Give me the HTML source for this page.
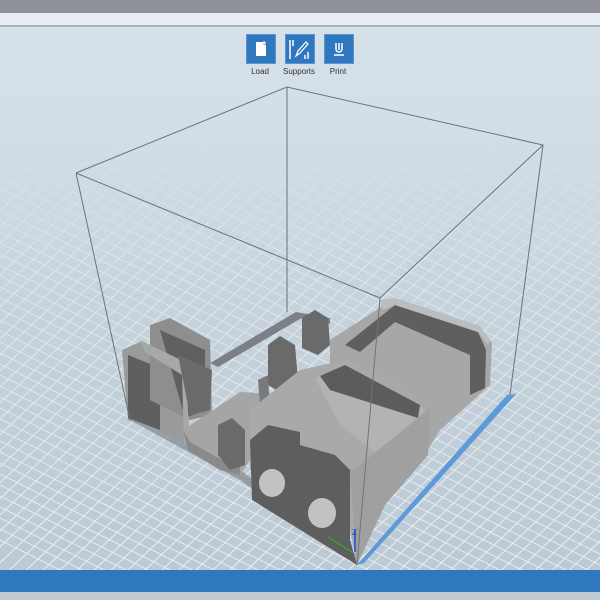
<!DOCTYPE html>
<html><head><meta charset="utf-8"><style>
html,body{margin:0;padding:0;width:600px;height:600px;overflow:hidden;font-family:"Liberation Sans",sans-serif}
#bg{position:absolute;left:0;top:0;width:600px;height:600px;background:linear-gradient(#d6e1ea 0,#d3dee7 120px,#c6d3dd 300px,#bccad5 560px)}
.tabs{position:absolute;left:0;top:0;width:600px;height:13px;background:#8e9296}
.addr{position:absolute;left:0;top:13px;width:600px;height:12px;background:#e9ecf4;border-bottom:2px solid #a9b0b8}
.btn{position:absolute;top:34px;width:28px;height:28px;background:#2f78c0;border:1px solid #5b95cf}
.lbl{position:absolute;top:67px;font-size:8px;color:#333;text-align:center;width:60px}
.bar{position:absolute;left:0;top:570px;width:600px;height:22px;background:#2f78bf}
.bot{position:absolute;left:0;top:592px;width:600px;height:8px;background:#bfcad3}
</style></head><body>
<div id="bg"></div>
<svg id="g" width="600" height="600" style="position:absolute;left:0;top:0;overflow:hidden">
<defs><linearGradient id="fade" x1="0" y1="0" x2="0" y2="1"><stop offset="0.22" stop-color="#fff" stop-opacity="0"/><stop offset="0.45" stop-color="#fff" stop-opacity="0.4"/><stop offset="1" stop-color="#fff" stop-opacity="0.75"/></linearGradient>
<mask id="m"><rect x="0" y="0" width="600" height="600" fill="url(#fade)"/></mask></defs>
<g id="grid" mask="url(#m)" stroke="#fff" stroke-width="1" fill="none"></g>
<polygon points="357,565 507,395 516,394 364,563" fill="#5d9ad6"/>
<polygon points="210,363 296,312 305,316 218,367" fill="#7a8085"/>
<polygon points="296,312 330,318 330,324 300,318" fill="#7a8085"/>
<polygon points="130,420 240,480 357,565 357,555 240,470 135,412" fill="#8a9096" opacity="0.8"/>
<!-- left holders -->
<polygon points="122,350 140,342 185,380 185,440 160,430 128,420" fill="#9a9a9a"/>
<polygon points="128,355 160,368 160,430 128,418" fill="#5f5f5f"/>
<polygon points="150,325 170,318 210,340 212,415 190,420 150,400" fill="#8e8e8e"/>
<polygon points="160,330 205,350 205,410 185,418" fill="#606060"/>
<polygon points="140,340 185,362 190,440 184,445 182,375 145,352" fill="#a8a8a8"/>
<polygon points="178,355 212,370 210,410 190,415" fill="#6a6a6a"/>
<!-- plate -->
<polygon points="183,430 240,392 300,395 250,460 240,475 220,470 188,450" fill="#a5a5a5"/>
<polygon points="183,430 188,450 220,470 240,475 240,465 222,460 190,442" fill="#8a8a8a"/>
<!-- right box -->
<polygon points="330,340 395,298 480,326 492,343 490,385 440,430 425,455 400,440 330,368" fill="#a7a7a7"/>
<polygon points="345,345 395,305 478,332 486,350 485,388 470,395 470,355 395,322 360,352" fill="#5f5f5f"/>
<polygon points="380,300 395,298 480,326 490,340 488,345 478,332 395,305 383,310" fill="#bdbdbd"/>
<!-- tabs -->
<polygon points="302,318 315,310 328,318 330,345 318,355 302,348" fill="#6a6a6a"/>
<polygon points="268,345 280,336 295,345 298,380 285,395 268,385" fill="#6a6a6a"/>
<polygon points="258,380 268,375 270,410 260,405" fill="#7a7a7a"/>
<!-- front box -->
<polygon points="250,410 300,370 345,360 395,380 430,408 428,455 380,510 357,565 350,530 290,490 250,470" fill="#a9a9a9"/>
<polygon points="315,378 345,365 390,390 425,410 385,460 340,425" fill="#b3b3b3"/>
<polygon points="320,376 345,365 420,405 418,418 330,390" fill="#5c5c5c"/>
<polygon points="250,440 268,425 300,432 300,445 335,455 350,470 350,540 357,565 252,500" fill="#5e5e5e"/>
<polygon points="357,565 350,470 360,465 430,408 428,455 385,505" fill="#a0a0a0"/>
<polygon points="218,425 232,418 245,430 245,465 230,470 218,455" fill="#6a6a6a"/>
<ellipse cx="272" cy="483" rx="13" ry="14" fill="#c2c2c2"/>
<ellipse cx="322" cy="513" rx="14" ry="15" fill="#c2c2c2"/>
<line x1="328" y1="537" x2="352" y2="552" stroke="#22c022" stroke-width="1"/>
<line x1="355" y1="530" x2="355" y2="552" stroke="#2244dd" stroke-width="1.5"/>
<text x="352" y="535" font-size="8" fill="#2244dd" font-family="Liberation Sans">Z</text>
<g stroke="#6e7378" stroke-width="1" fill="none">
<polyline points="76,173 287,87 543,145 380,298 76,173"/>
<line x1="76" y1="173" x2="130" y2="420"/>
<line x1="287" y1="87" x2="287" y2="312"/>
<line x1="543" y1="145" x2="510" y2="395"/>
<line x1="380" y1="298" x2="357" y2="565"/>
</g>
</svg>
<div class="tabs"></div><div class="addr"></div>
<div class="btn" style="left:246px"><svg width="28" height="28"><path d="M9 7h7v3h3v11H9z" fill="#fff"/><path d="M17 6v4M15 8h4" stroke="#fff" stroke-width="1.2"/></svg></div>
<div class="btn" style="left:285px"><svg width="28" height="28"><path d="M4 5v19M7 5v6M22 17v7M19 20v4" stroke="#fff" stroke-width="1.5"/><path d="M10 21l2-5 8-9 2 2-8 9z" stroke="#fff" fill="none" stroke-width="1.2"/></svg></div>
<div class="btn" style="left:324px"><svg width="28" height="28"><path d="M11 8v6a3 3 0 0 0 6 0V8M14 8v7M9 20h10" stroke="#fff" stroke-width="1.5" fill="none"/></svg></div>
<div class="lbl" style="left:230px">Load</div>
<div class="lbl" style="left:269px">Supports</div>
<div class="lbl" style="left:308px">Print</div>
<div class="bar"></div><div class="bot"></div>
<script>
var g=document.getElementById('grid'),s='';
for(var i=-40;i<60;i++){var x=300+i*22;s+='<line x1="'+(x-900)+'" y1="-200" x2="'+(x+900)+'" y2="700"/>';}
for(var i=-10;i<80;i++){var y=i*16;s+='<line x1="-50" y1="'+(y+50)+'" x2="650" y2="'+(y-610)+'"/>';}
g.innerHTML=s;
</script>
</body></html>
